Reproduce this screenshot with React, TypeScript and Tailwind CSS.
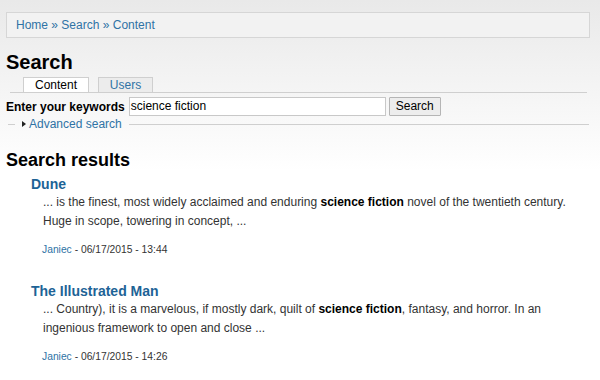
export default function App() {
  return (
    <div
      className="w-[600px] h-[380px] overflow-hidden bg-gradient-to-b from-[#e9e9e9] via-[#ffffff] via-[45%] to-[#ffffff] text-[#333] text-[12px]"
      style={{ fontFamily: '"Liberation Sans", Arial, sans-serif' }}
    >
      <div className="pt-[12px] px-[6px] pr-[10px]">
        <div className="h-[26px] border border-[#d6d6d6] bg-[#f2f2f2] flex items-center pl-[9px] text-[12px] text-[#2f73a5]">
          Home » Search » Content
        </div>
      </div>
      <h1 className="mt-[12px] ml-[6px] text-[20px] font-bold text-black leading-[24px]">Search</h1>
      <div className="mt-[4px] ml-[10px] mr-[13px] border-b border-[#cfcfcf] flex gap-[9px] pl-[13px] h-[15px] items-end">
        <div className="w-[66px] h-[15px] border border-b-0 border-[#cfcfcf] bg-white text-black text-[12px] leading-[14px] text-center">Content</div>
        <div className="w-[55px] h-[15px] border border-b-0 border-[#cfcfcf] bg-[#ececec] text-[#2f73a5] text-[12px] leading-[14px] text-center">Users</div>
      </div>
      <div className="mt-[4px] ml-[6px] flex items-center h-[19px]">
        <span className="font-bold text-black text-[12px]">Enter your keywords</span>
        <div className="ml-[4px] w-[257px] h-[19px] border border-[#c8c8c8] bg-white text-black text-[12px] leading-[17px] pl-[1px]">science fiction</div>
        <div className="ml-[3px] w-[52px] h-[19px] border border-[#b5b5b5] bg-[#ededed] text-black text-[12px] leading-[17px] text-center rounded-[1px]">Search</div>
      </div>
      <div className="ml-[8px] mr-[11px] flex items-center h-[16px]">
        <div className="w-[7px] border-t border-[#cfcfcf]"></div>
        <svg className="ml-[7px]" width="4" height="6" viewBox="0 0 4 6"><path d="M0 0 L4 3 L0 6 Z" fill="#222" /></svg>
        <span className="ml-[3px] text-[#2f73a5] text-[12px]">Advanced search</span>
        <div className="flex-1 ml-[7px] border-t border-[#cfcfcf]"></div>
      </div>
      <h2 className="mt-[17px] ml-[6px] text-[18px] font-bold text-black leading-[22px]">Search results</h2>
      <div className="ml-[31px] mt-[5px]">
        <div className="text-[14px] font-bold text-[#1d6396] leading-[17px]">Dune</div>
        <p className="ml-[12px] leading-[19px] text-[12px] text-[#333]">
          ... is the finest, most widely acclaimed and enduring <b className="text-black">science fiction</b> novel of the twentieth century.<br />
          Huge in scope, towering in concept, ...
        </p>
        <div className="ml-[11px] mt-[12px] text-[10.3px] leading-[13px] text-[#333]">
          <span className="text-[#2f73a5]">Janiec</span> - 06/17/2015 - 13:44
        </div>
      </div>
      <div className="ml-[31px] mt-[27px]">
        <div className="text-[14px] font-bold text-[#1d6396] leading-[17px]">The Illustrated Man</div>
        <p className="ml-[12px] leading-[19px] text-[12px] text-[#333]">
          ... Country), it is a marvelous, if mostly dark, quilt of <b className="text-black">science fiction</b>, fantasy, and horror. In an<br />
          ingenious framework to open and close ...
        </p>
        <div className="ml-[11px] mt-[12px] text-[10.3px] leading-[13px] text-[#333]">
          <span className="text-[#2f73a5]">Janiec</span> - 06/17/2015 - 14:26
        </div>
      </div>
    </div>
  );
}
